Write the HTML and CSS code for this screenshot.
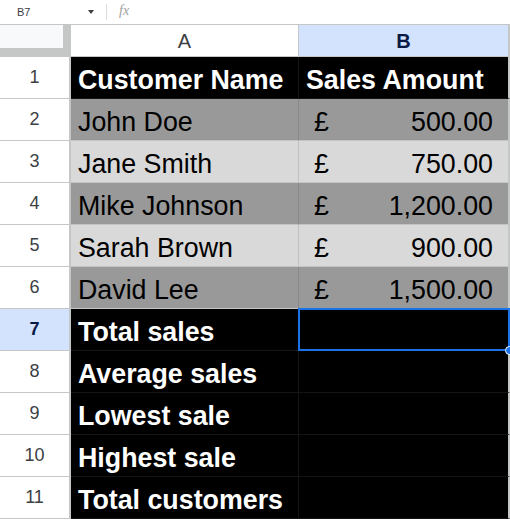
FILE: index.html
```html
<!DOCTYPE html>
<html>
<head>
<meta charset="utf-8">
<link rel="stylesheet" href="styles.css">
</head>
<body>
<div class="fbar">
  <div class="namebox">B7</div>
  <div class="caret"></div>
  <div class="sep"></div>
  <div class="fx">fx</div>
</div>
<div class="sheet">
  <div class="corner"><div class="corner-in"></div></div>
  <div class="colh">A</div>
  <div class="colh sel last">B</div>

  <div class="rowh">1</div>
  <div class="cell blk bold">Customer Name</div>
  <div class="cell blk bold last">Sales Amount</div>

  <div class="rowh">2</div>
  <div class="cell dk">John Doe</div>
  <div class="cell dk last num"><span class="cur">£</span><span>500.00</span></div>

  <div class="rowh">3</div>
  <div class="cell lt">Jane Smith</div>
  <div class="cell lt last num"><span class="cur">£</span><span>750.00</span></div>

  <div class="rowh">4</div>
  <div class="cell dk">Mike Johnson</div>
  <div class="cell dk last num"><span class="cur">£</span><span>1,200.00</span></div>

  <div class="rowh">5</div>
  <div class="cell lt">Sarah Brown</div>
  <div class="cell lt last num"><span class="cur">£</span><span>900.00</span></div>

  <div class="rowh">6</div>
  <div class="cell dk">David Lee</div>
  <div class="cell dk last num"><span class="cur">£</span><span>1,500.00</span></div>

  <div class="rowh sel">7</div>
  <div class="cell blk bold">Total sales</div>
  <div class="cell blk last active"></div>

  <div class="rowh">8</div>
  <div class="cell blk bold">Average sales</div>
  <div class="cell blk last"></div>

  <div class="rowh">9</div>
  <div class="cell blk bold">Lowest sale</div>
  <div class="cell blk last"></div>

  <div class="rowh">10</div>
  <div class="cell blk bold">Highest sale</div>
  <div class="cell blk last"></div>

  <div class="rowh">11</div>
  <div class="cell blk bold">Total customers</div>
  <div class="cell blk last"></div>
</div>
</body>
</html>
```
FILE: styles.css
```css
html, body {
  margin: 0;
  padding: 0;
  background: #ffffff;
  overflow: hidden;
}
body {
  width: 510px;
  height: 523px;
  font-family: "Liberation Sans", Arial, sans-serif;
}
.fbar {
  box-sizing: border-box;
  height: 25px;
  border-bottom: 1px solid #c4c7c5;
  display: flex;
  align-items: center;
}
.namebox {
  font-size: 11px;
  color: #3c4043;
  margin-left: 17px;
  width: 71px;
}
.caret {
  width: 0;
  height: 0;
  border-left: 3.5px solid transparent;
  border-right: 3.5px solid transparent;
  border-top: 4px solid #3c4043;
}
.sep {
  width: 1px;
  height: 16px;
  background: #dadce0;
  margin-left: 12px;
}
.fx {
  font-family: "Liberation Serif", serif;
  font-style: italic;
  font-size: 14px;
  color: #a0a0a0;
  margin-left: 12px;
  margin-bottom: 2px;
}
.sheet {
  display: grid;
  grid-template-columns: 71px 228px 211px;
  grid-template-rows: 32px repeat(11, 42px);
}
.corner {
  background: #c4c7c5;
}
.corner-in {
  width: 63px;
  height: 23px;
  background: #f8f9fa;
}
.colh {
  box-sizing: border-box;
  background: #ffffff;
  border-right: 1px solid #c4c7c5;
  border-bottom: 1px solid #c4c7c5;
  display: flex;
  align-items: center;
  justify-content: center;
  font-size: 20px;
  color: #3c4043;
  padding-top: 1px;
}
.colh.sel {
  background: #d3e3fd;
  color: #0b1a45;
  font-weight: bold;
}
.colh.last, .cell.last {
  border-right: 2px solid #c4c7c5;
}
.rowh {
  box-sizing: border-box;
  background: #ffffff;
  border-right: 2px solid #c4c7c5;
  border-bottom: 1px solid #c4c7c5;
  display: flex;
  align-items: center;
  justify-content: center;
  font-size: 18px;
  color: #3c4043;
}
.rowh.sel {
  background: #d3e3fd;
  color: #0b1a45;
  font-weight: bold;
}
.cell {
  box-sizing: border-box;
  border-right: 1px solid rgba(0,0,0,0.1);
  border-bottom: 1px solid #c4c4c4;
  display: flex;
  align-items: flex-end;
  padding: 0 6px 3px 7px;
  font-size: 26.8px;
  line-height: 30px;
  white-space: nowrap;
  overflow: hidden;
}
.cell.blk {
  background: #000000;
  color: #ffffff;
  border-bottom-color: #141414;
  border-right-color: #141414;
}
.cell.blk.last {
  border-right: 2px solid #c4c7c5;
}
.cell.dk {
  background: #999999;
  color: #000000;
}
.cell.lt {
  background: #d9d9d9;
  color: #000000;
}
.bold {
  font-weight: bold;
}
.num {
  justify-content: space-between;
  padding-left: 15px;
  padding-right: 15px;
}
.active {
  position: relative;
  overflow: visible;
}
.active::after {
  content: "";
  position: absolute;
  left: -1px;
  top: -1px;
  right: -2px;
  bottom: -1px;
  border: 2px solid #1a73e8;
}
.active::before {
  content: "";
  position: absolute;
  right: -6px;
  bottom: -5px;
  width: 7px;
  height: 7px;
  border-radius: 50%;
  background: #1a73e8;
  border: 1px solid #ffffff;
  z-index: 2;
}
```
